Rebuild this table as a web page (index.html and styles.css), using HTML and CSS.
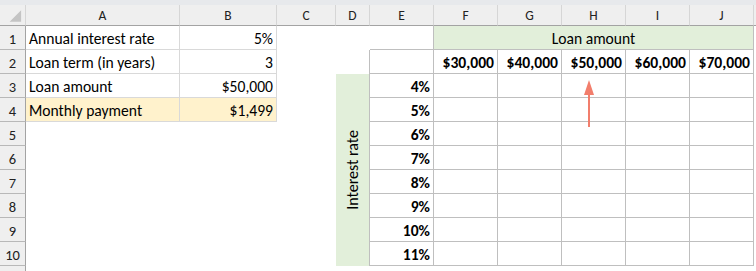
FILE: index.html
```html
<!DOCTYPE html>
<html>
<head>
<meta charset="utf-8">
<link rel="stylesheet" href="styles.css">
</head>
<body>
<div class="sheet">
  <div class="topstrip"></div>
  <div class="grid">
    <!-- header row -->
    <div class="corner"><svg width="26" height="20" viewBox="0 0 26 20"><polygon points="22,5 22,17 10,17" fill="#c4c4c4"/></svg></div>
    <div class="ch">A</div>
    <div class="ch">B</div>
    <div class="ch">C</div>
    <div class="ch">D</div>
    <div class="ch">E</div>
    <div class="ch">F</div>
    <div class="ch">G</div>
    <div class="ch">H</div>
    <div class="ch">I</div>
    <div class="ch">J</div>
    <div class="ch fill"></div>

    <!-- row 1 -->
    <div class="rh">1</div>
    <div class="c ab">Annual interest rate</div>
    <div class="c ab num">5%</div>
    <div class="c"></div>
    <div class="c"></div>
    <div class="c t"></div>
    <div class="c t green merge-h">Loan amount</div>
    <div class="c"></div>

    <!-- row 2 -->
    <div class="rh">2</div>
    <div class="c ab">Loan term (in years)</div>
    <div class="c ab num">3</div>
    <div class="c"></div>
    <div class="c dr"></div>
    <div class="c t"></div>
    <div class="c t num bold">$30,000</div>
    <div class="c t num bold">$40,000</div>
    <div class="c t num bold">$50,000</div>
    <div class="c t num bold">$60,000</div>
    <div class="c t num bold">$70,000</div>
    <div class="c"></div>

    <!-- row 3 -->
    <div class="rh">3</div>
    <div class="c ab">Loan amount</div>
    <div class="c ab num">$50,000</div>
    <div class="c"></div>
    <div class="c dr green merge-v"><span class="vtext">Interest rate</span></div>
    <div class="c t num bold">4%</div>
    <div class="c t"></div><div class="c t"></div><div class="c t"></div><div class="c t"></div><div class="c t"></div>
    <div class="c"></div>

    <!-- row 4 -->
    <div class="rh">4</div>
    <div class="c ab yellow">Monthly payment</div>
    <div class="c ab yellow num">$1,499</div>
    <div class="c"></div>
    <div class="c t num bold">5%</div>
    <div class="c t"></div><div class="c t"></div><div class="c t"></div><div class="c t"></div><div class="c t"></div>
    <div class="c"></div>

    <!-- row 5 -->
    <div class="rh">5</div>
    <div class="c blank"></div>
    <div class="c t num bold">6%</div>
    <div class="c t"></div><div class="c t"></div><div class="c t"></div><div class="c t"></div><div class="c t"></div>
    <div class="c"></div>

    <!-- row 6 -->
    <div class="rh">6</div>
    <div class="c t num bold">7%</div>
    <div class="c t"></div><div class="c t"></div><div class="c t"></div><div class="c t"></div><div class="c t"></div>
    <div class="c"></div>

    <!-- row 7 -->
    <div class="rh">7</div>
    <div class="c t num bold">8%</div>
    <div class="c t"></div><div class="c t"></div><div class="c t"></div><div class="c t"></div><div class="c t"></div>
    <div class="c"></div>

    <!-- row 8 -->
    <div class="rh">8</div>
    <div class="c t num bold">9%</div>
    <div class="c t"></div><div class="c t"></div><div class="c t"></div><div class="c t"></div><div class="c t"></div>
    <div class="c"></div>

    <!-- row 9 -->
    <div class="rh">9</div>
    <div class="c t num bold">10%</div>
    <div class="c t"></div><div class="c t"></div><div class="c t"></div><div class="c t"></div><div class="c t"></div>
    <div class="c"></div>

    <!-- row 10 -->
    <div class="rh">10</div>
    <div class="c t num bold">11%</div>
    <div class="c t"></div><div class="c t"></div><div class="c t"></div><div class="c t"></div><div class="c t"></div>
    <div class="c"></div>

    <!-- partial row 11 -->
    <div class="rh last"></div>
  </div>
  <svg class="arrow" width="12" height="48" viewBox="0 0 12 48">
    <polygon points="6,1 11,16 1,16" fill="#f27e6c"/>
    <rect x="5" y="15" width="2" height="33" fill="#f27e6c"/>
  </svg>
</div>
</body>
</html>
```

FILE: styles.css
```css
* { box-sizing: border-box; }
html, body {
  margin: 0;
  padding: 0;
  background: #ffffff;
}
body {
  width: 756px;
  height: 271px;
  overflow: hidden;
  font-family: Calibri, Carlito, Lato, "Liberation Sans", sans-serif;
  color: #111111;
}
.sheet {
  position: relative;
  width: 756px;
  height: 271px;
}
.topstrip {
  height: 5px;
  background: #e7e9ec;
}
.grid {
  display: grid;
  grid-template-columns: 26px 154px 97px 59px 34px repeat(6, 64px) 2px;
  grid-template-rows: 21px repeat(10, 24px) 5px;
}
.corner {
  background: #efefef;
  border-right: 1px solid #d6d6d6;
  border-bottom: 1px solid #a3a3a3;
  display: flex;
}
.ch {
  background: #efefef;
  border-right: 1px solid #d6d6d6;
  border-bottom: 1px solid #a3a3a3;
  display: flex;
  align-items: center;
  justify-content: center;
  font-size: 13.5px;
  color: #222222;
  padding-top: 1px;
}
.ch.fill { border-right: none; }
.rh {
  grid-column: 1;
  background: #efefef;
  border-right: 1px solid #a3a3a3;
  border-bottom: 1px solid #b8b8b8;
  display: flex;
  align-items: center;
  justify-content: center;
  font-size: 14.5px;
  color: #222222;
  padding-top: 2px;
}
.rh.last { border-bottom: none; }
.c {
  display: flex;
  align-items: center;
  font-size: 15.6px;
  line-height: 18px;
  padding: 3px 3px 0 3px;
  white-space: nowrap;
  color: #000000;
}
.ab {
  border-right: 1px solid #d9d9d9;
  border-bottom: 1px solid #d9d9d9;
}
.t {
  border-right: 1px solid #bfbfbf;
  border-bottom: 1px solid #bfbfbf;
}
.dr {
  border-right: 1px solid #bfbfbf;
}
.num { justify-content: flex-end; }
.bold { font-weight: bold; }
.green { background: #e2efda; }
.yellow { background: #fff2cc; }
.merge-h {
  grid-column: span 5;
  justify-content: center;
}
.merge-v {
  grid-row: span 8;
  justify-content: center;
  padding: 0 0 0 1px;
}
.vtext {
  writing-mode: vertical-rl;
  transform: rotate(180deg);
  font-size: 16px;
  line-height: 18px;
}
.blank {
  grid-column: 2 / span 3;
  grid-row: span 6;
}
.arrow {
  position: absolute;
  left: 583px;
  top: 79px;
}
```
